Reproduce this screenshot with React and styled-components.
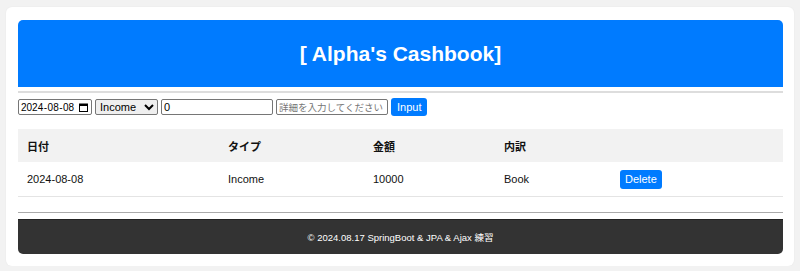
import React from 'react';
import styled, { createGlobalStyle } from "styled-components";

const GlobalStyle = createGlobalStyle`
    body {
        margin: 0;
        background: #f2f2f2;
        font-family: "Liberation Sans", Arial, "Noto Sans CJK JP", sans-serif;
    }
`

const Container = styled.div`
    margin: 7px 6px 0 6px;
    height: 259px;
    box-sizing: border-box;
    background: #fff;
    border-radius: 6px;
    padding: 13px 11px 0 12px;
    box-shadow: 0 0 2px rgba(0,0,0,0.05);
`

const Header = styled.header`
    background: #007bff;
    border-radius: 5px 5px 0 0;
    height: 67px;
    display: flex;
    align-items: center;
    justify-content: center;
`

const Title = styled.h1`
    margin: 0;
    color: #fff;
    font-size: 21px;
    font-weight: bold;
`

const Rule = styled.hr`
    margin: ${p => p.$top}px 0 0 0;
    border: none;
    border-top: ${p => p.$thick}px solid ${p => p.$color};
`

const Form = styled.form`
    display: flex;
    align-items: center;
    gap: 3px;
    margin-top: 5px;
`

const Field = styled.input`
    box-sizing: border-box;
    height: 16px;
    width: ${p => p.$w}px;
    font-family: "Liberation Sans", Arial, "Noto Sans CJK JP", sans-serif;
    font-size: 11px;
    padding: 0 2px;
    border: 1px solid #767676;
    border-radius: 2px;
    margin: 0;
    &::placeholder { color: #757575; font-size: 9.5px; }
`

const DateBox = styled.label`
    box-sizing: border-box;
    height: 16px;
    width: 74px;
    display: flex;
    align-items: center;
    justify-content: space-between;
    padding: 0 3px 0 2px;
    border: 1px solid #767676;
    border-radius: 2px;
    font-family: "Liberation Sans", Arial, sans-serif;
    font-size: 10px;
    color: #000;
`

const Dash = styled.span`
    margin: 0 0.5px;
`

const Select = styled.select`
    box-sizing: border-box;
    height: 16px;
    width: 63px;
    font-family: "Liberation Sans", Arial, sans-serif;
    font-size: 11px;
    padding: 0;
    border: 1px solid #767676;
    border-radius: 2px;
    margin: 0;
`

const Button = styled.button`
    background: #007bff;
    color: #fff;
    border: none;
    border-radius: 3px;
    font-family: "Liberation Sans", Arial, sans-serif;
    font-size: 11px;
    height: ${p => p.$h}px;
    padding: 0 ${p => p.$px}px;
`

const Table = styled.table`
    width: 100%;
    table-layout: fixed;
    border-collapse: collapse;
    margin-top: 13px;
    font-size: 11px;
    color: #111;
`

const Th = styled.th`
    background: #f2f2f2;
    text-align: left;
    font-weight: bold;
    height: 33px;
    padding: 0 0 0 9px;
    width: ${p => p.$w ? `${p.$w}px` : 'auto'};
    font-family: "Liberation Sans", Arial, "Noto Sans CJK JP", sans-serif;
`

const Td = styled.td`
    height: 34px;
    padding: 0 0 0 9px;
    border-bottom: 1px solid #e4e4e4;
`

const Footer = styled.footer`
    margin-top: 6px;
    background: #333;
    border-top: 1px solid #222;
    border-radius: 0 0 5px 5px;
    height: 34px;
    display: flex;
    align-items: center;
    justify-content: center;
    color: #fff;
    font-size: 9.5px;
`

function CalendarIcon () {return (
    <svg width="9" height="9" viewBox="0 0 9 9">
        <rect x="0.5" y="1" width="8" height="7.5" fill="none" stroke="#000" strokeWidth="1" />
        <rect x="0.5" y="1" width="8" height="2" fill="#000" />
    </svg>
)}

export default function App () {return (
    <>
        <GlobalStyle />
        <Container>
            <Header>
                <Title>[ Alpha's Cashbook]</Title>
            </Header>
            <Rule $top={4} $thick={2} $color="#ddd" />
            <Form onSubmit={e => e.preventDefault()}>
                <DateBox>
                    <span>2024<Dash>-</Dash>08<Dash>-</Dash>08</span>
                    <CalendarIcon />
                </DateBox>
                <Select defaultValue="Income">
                    <option>Income</option>
                    <option>Expense</option>
                </Select>
                <Field type="number" defaultValue="0" $w={112} />
                <Field type="text" placeholder="詳細を入力してください" $w={112} />
                <Button $h={18} $px={6}>Input</Button>
            </Form>
            <Table>
                <thead>
                    <tr>
                        <Th $w={192}>日付</Th>
                        <Th $w={136}>タイプ</Th>
                        <Th $w={122}>金額</Th>
                        <Th $w={107}>内訳</Th>
                        <Th></Th>
                    </tr>
                </thead>
                <tbody>
                    <tr>
                        <Td>2024-08-08</Td>
                        <Td>Income</Td>
                        <Td>10000</Td>
                        <Td>Book</Td>
                        <Td><Button $h={19} $px={5}>Delete</Button></Td>
                    </tr>
                </tbody>
            </Table>
            <Rule $top={15} $thick={1} $color="#aaa" />
            <Footer>© 2024.08.17 SpringBoot &amp; JPA &amp; Ajax 練習</Footer>
        </Container>
    </>
)};
